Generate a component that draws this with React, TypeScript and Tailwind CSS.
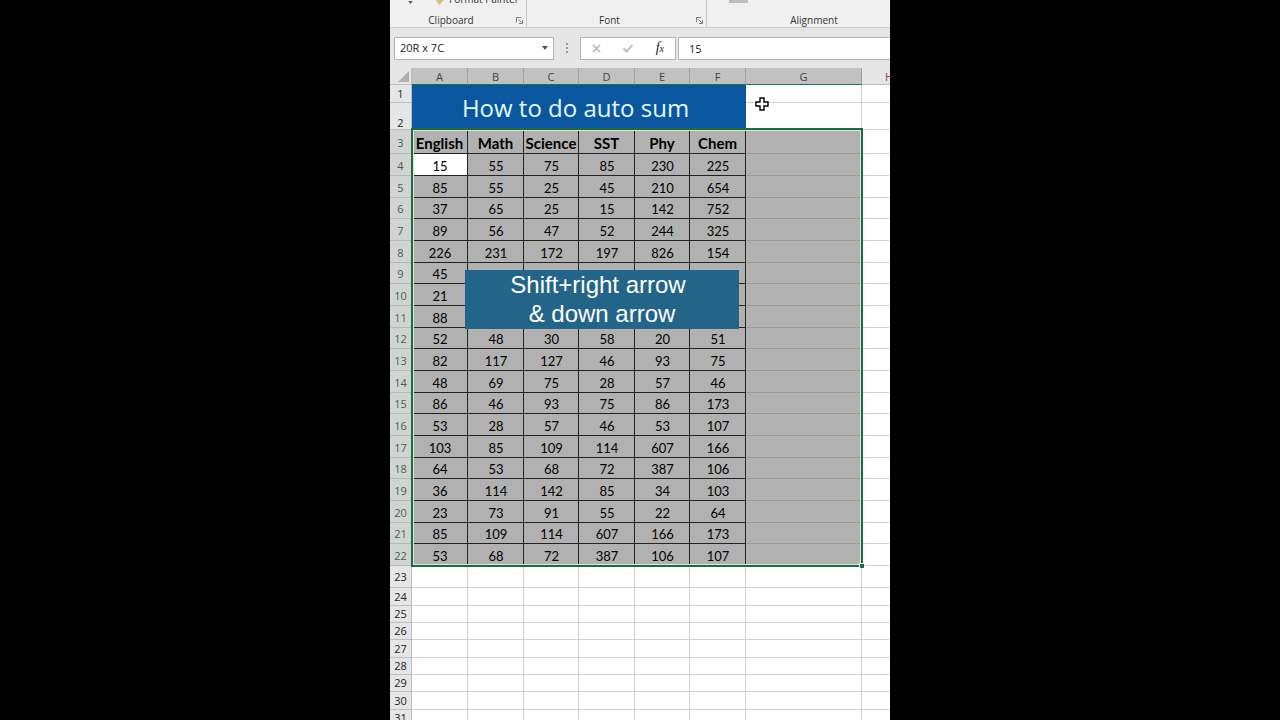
import type { ReactNode } from 'react'

const columns = ['A', 'B', 'C', 'D', 'E', 'F', 'G', 'H']
const subjects = ['English', 'Math', 'Science', 'SST', 'Phy', 'Chem']

const scores = [
  [15, 55, 75, 85, 230, 225],
  [85, 55, 25, 45, 210, 654],
  [37, 65, 25, 15, 142, 752],
  [89, 56, 47, 52, 244, 325],
  [226, 231, 172, 197, 826, 154],
  [45, null, null, null, null, null],
  [21, null, null, null, null, null],
  [88, null, null, null, null, null],
  [52, 48, 30, 58, 20, 51],
  [82, 117, 127, 46, 93, 75],
  [48, 69, 75, 28, 57, 46],
  [86, 46, 93, 75, 86, 173],
  [53, 28, 57, 46, 53, 107],
  [103, 85, 109, 114, 607, 166],
  [64, 53, 68, 72, 387, 106],
  [36, 114, 142, 85, 34, 103],
  [23, 73, 91, 55, 22, 64],
  [85, 109, 114, 607, 166, 173],
  [53, 68, 72, 387, 106, 107],
]

const emptyRows = [24, 25, 26, 27, 28, 29, 30, 31]

function RowHead({ n, selected = false, low = false }: { n: number; selected?: boolean; low?: boolean }) {
  return (
    <th
      scope="row"
      className={`border-b border-r p-0 font-['Open_Sans',sans-serif] text-[11px] font-normal ${low ? 'align-bottom leading-[12px]' : 'align-middle leading-[14px]'} ${
        selected ? 'border-[#b2b8b4] bg-[#d2d4d3] pt-[2px] text-[#3f5f52]' : 'border-[#bdbdbd] bg-[#e6e6e6] text-[#222]'
      }`}
    >
      {n}
    </th>
  )
}

function Launcher() {
  return (
    <svg className="size-[7px]" viewBox="0 0 8 8" fill="none" stroke="#666" strokeWidth="1">
      <path d="M.5 6V.5H6M3 3l3.5 3.5M7.5 3.5v4h-4" />
    </svg>
  )
}

function RibbonGroup({ label, className, children }: { label: string; className: string; children?: ReactNode }) {
  return (
    <div className={`relative flex items-end justify-center border-[#c8c8c8] ${className}`}>
      {children}
      <span>{label}</span>
    </div>
  )
}

function Ribbon() {
  return (
    <div className="flex h-[28px] overflow-hidden border-b border-[#cfcfcf] bg-[#f0f0f0] text-[10px] leading-[13px] text-[#333]">
      <RibbonGroup label="Clipboard" className="w-[137px] border-r pr-[14px]">
        <svg className="absolute left-[18px] top-[1px] h-[3px] w-[5px]" viewBox="0 0 6 4">
          <path d="M0 0h6L3 4z" fill="#555" />
        </svg>
        <button className="absolute left-[44px] -top-[7px] flex items-center gap-1 whitespace-nowrap">
          <svg className="h-[13px] w-[11px]" viewBox="0 0 11 13">
            <path d="M1 6l5-3 4 4-5 5z" fill="#d0c078" />
            <path d="M6 3l3-2 2 4-1 2z" fill="#777" />
          </svg>
          Format Painter
        </button>
        <button aria-label="Clipboard settings" className="absolute bottom-[3px] right-[3px]">
          <Launcher />
        </button>
      </RibbonGroup>
      <RibbonGroup label="Font" className="w-[180px] border-r pr-[14px]">
        <button aria-label="Font settings" className="absolute bottom-[3px] right-[3px]">
          <Launcher />
        </button>
      </RibbonGroup>
      <RibbonGroup label="Alignment" className="flex-1 pl-[31px]">
        <span className="absolute left-[22px] top-0 h-[3px] w-[19px] bg-[#bdbdbd]" />
      </RibbonGroup>
    </div>
  )
}

function FormulaBar() {
  return (
    <div className="flex h-[40px] items-center bg-[#e6e6e6] pl-1 text-[11px] text-[#222]">
      <div className="flex h-[23px] w-[160px] items-center justify-between border border-[#b5b5b5] bg-white pl-[5px] pr-[5px]">
        <input aria-label="Name box" defaultValue="20R x 7C" className="w-[120px] bg-transparent outline-none" />
        <button aria-label="Open name list">
          <svg className="h-[4px] w-[6px]" viewBox="0 0 6 4">
            <path d="M0 0h6L3 4z" fill="#555" />
          </svg>
        </button>
      </div>
      <svg className="mx-[12px] h-[10px] w-[2px]" viewBox="0 0 2 10" fill="#999">
        <path d="M0 0h2v2H0zM0 4h2v2H0zM0 8h2v2H0z" />
      </svg>
      <div className="flex h-[23px] w-[96px] items-center justify-between border border-[#b5b5b5] bg-white px-[11px]">
        <button aria-label="Cancel">
          <svg className="size-[9px]" viewBox="0 0 10 10" fill="none" stroke="#bcbcbc" strokeWidth="1.8">
            <path d="M1 1l8 8M9 1L1 9" />
          </svg>
        </button>
        <button aria-label="Enter">
          <svg className="h-[9px] w-[12px]" viewBox="0 0 12 10" fill="none" stroke="#bcbcbc" strokeWidth="2">
            <path d="M1 5l3.500 3.500L11 1" />
          </svg>
        </button>
        <button aria-label="Insert function" className="font-['Liberation_Serif',serif] text-[14px] italic leading-[16px]">
          f<span className="text-[10px]">x</span>
        </button>
      </div>
      <input
        aria-label="Formula"
        defaultValue="15"
        className="ml-[2px] h-[23px] min-w-0 flex-1 border border-r-0 border-[#b5b5b5] bg-white pl-[10px] outline-none"
      />
    </div>
  )
}

function Sheet() {
  return (
    <div className="relative">
      <table className="w-full table-fixed border-separate border-spacing-0 text-center">
        <colgroup>
          <col className="w-[22px]" />
          <col className="w-[56px]" />
          <col className="w-[56px]" />
          <col className="w-[55px]" />
          <col className="w-[56px]" />
          <col className="w-[55px]" />
          <col className="w-[56px]" />
          <col className="w-[116px]" />
          <col />
        </colgroup>
        <thead>
          <tr className="h-[17px] text-[11px] leading-[15px] text-[#444]">
            <th className="border-b border-r border-[#bdbdbd] bg-[#e6e6e6] p-0">
              <svg className="ml-auto mr-[2px] size-[11px]" viewBox="0 0 11 11">
                <path d="M11 0v11H0z" fill="#b0b0b0" />
              </svg>
            </th>
            {columns.map((c) => (
              <th
                key={c}
                scope="col"
                className={`overflow-hidden border-b p-0 font-normal ${
                  c === 'H' ? 'border-[#bdbdbd] bg-[#e6e6e6] pl-[23px] text-left text-[#8a3a5a]' : 'border-r border-b-[#1d7145] border-r-[#a0a0a0] bg-[#c1c1c1]'
                }`}
              >
                {c}
              </th>
            ))}
          </tr>
        </thead>
        <tbody className="font-['Lato',sans-serif] text-[13px] leading-[16px] text-[#111]">
          <tr className="h-[18px]">
            <RowHead n={1} />
            <td colSpan={6} rowSpan={2} className="bg-[#0a57a0] p-0 pr-[7px] font-['Open_Sans',sans-serif] text-[24px] leading-[32px] text-[#e4f8ff]">
              How to do auto sum
            </td>
            <td className="border-b border-r border-[#d0d0d0]" />
            <td className="border-b border-[#d0d0d0]" />
          </tr>
          <tr className="h-[27px]">
            <RowHead n={2} low />
            <td className="border-r border-[#d0d0d0]" />
            <td className="border-b border-[#d0d0d0]" />
          </tr>
          <tr className="h-[24px] text-[15px] leading-[20px] text-black">
            <RowHead n={3} selected />
            {subjects.map((s) => (
              <td key={s} className="border-b border-r border-t border-[#222] bg-[#b1b1b1] p-0 pt-px font-bold">
                {s}
              </td>
            ))}
            <td className="border-b border-[#999] bg-[#b1b1b1]" />
            <td className="border-b border-[#d0d0d0]" />
          </tr>
          {scores.map((row, r) => (
            <tr key={r} className={r % 3 === 2 ? 'h-[21px]' : 'h-[22px]'}>
              <RowHead n={r + 4} selected />
              {row.map((v, c) => (
                <td key={c} className={`border-b border-r border-[#222] p-0 pt-[2px] pl-px text-black ${r === 0 && c === 0 ? 'bg-white' : 'bg-[#b1b1b1]'}`}>
                  {v}
                </td>
              ))}
              <td className="border-b border-[#999] bg-[#b1b1b1]" />
              <td className="border-b border-[#d0d0d0]" />
            </tr>
          ))}
          <tr className="h-[22px]">
            <RowHead n={23} />
            {columns.map((c) => (
              <td key={c} className="border-b border-r border-[#d0d0d0] last:border-r-0" />
            ))}
          </tr>
          {emptyRows.map((n) => (
            <tr key={n} className={n % 3 === 0 ? 'h-[18px]' : 'h-[17px]'}>
              <RowHead n={n} />
              {columns.map((c) => (
                <td key={c} className="border-b border-r border-[#d0d0d0] last:border-r-0" />
              ))}
            </tr>
          ))}
        </tbody>
      </table>

      {/* selection outline and fill handle */}
      <div className="pointer-events-none absolute left-[21px] top-[60px] h-[439px] w-[452px] border-2 border-[#1d6b42]">
        <div className="h-full border border-[#d5e8dc]" />
        <span className="absolute -bottom-[4px] -right-[4px] size-[6px] border border-white bg-[#1d6b42]" />
      </div>

      <svg className="absolute left-[365px] top-[29px] size-[14px]" viewBox="0 0 14 14" fill="white" stroke="black" strokeWidth="1.4">
        <path d="M5 1h4v4h4v4H9v4H5V9H1V5h4z" />
      </svg>

      <div className="absolute left-[75px] top-[202px] w-[274px] bg-[#236489] pb-px text-center font-['Liberation_Sans',sans-serif] text-[24px] leading-[29px] text-white">
        <p className="pr-[8px]">Shift+right arrow</p>
        <p>&amp; down arrow</p>
      </div>
    </div>
  )
}

export default function App() {
  return (
    <div className="h-screen overflow-hidden bg-black">
      <main className="mx-auto h-full w-full max-w-[500px] overflow-hidden bg-white font-['Open_Sans','Noto_Sans',sans-serif]">
        <Ribbon />
        <FormulaBar />
        <Sheet />
      </main>
    </div>
  )
}
